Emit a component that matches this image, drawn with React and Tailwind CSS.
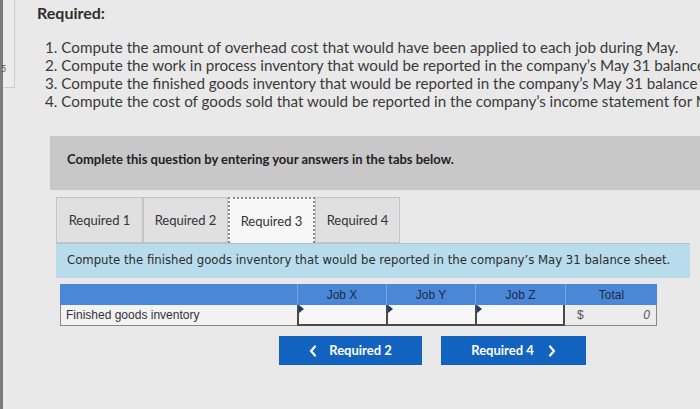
import React from 'react';

const tabs = ['Required 1', 'Required 2', 'Required 3', 'Required 4'];

const items = [
  '1. Compute the amount of overhead cost that would have been applied to each job during May.',
  '2. Compute the work in process inventory that would be reported in the company\u2019s May 31 balance sheet.',
  '3. Compute the finished goods inventory that would be reported in the company\u2019s May 31 balance sheet.',
  '4. Compute the cost of goods sold that would be reported in the company\u2019s income statement for May.',
];

const Marker = () => (
  <span className="absolute left-0 top-0 w-0 h-0 border-t-[4px] border-b-[4px] border-l-[5px] border-t-transparent border-b-transparent border-l-[#1f3b66]" />
);

const InputCell = ({ last }) => (
  <div className={`relative h-full bg-[#f7f7f7] border-l-2 border-b-2 border-[#4a4a4a] ${last ? 'border-r-2' : ''}`}>
    <Marker />
  </div>
);

const Chevron = ({ dir }) => (
  <svg width="8" height="12" viewBox="0 0 8 12" fill="none" stroke="white" strokeWidth="2.2" strokeLinecap="round" strokeLinejoin="round">
    {dir === 'left' ? <path d="M6 1.5 L2 6 L6 10.5" /> : <path d="M2 1.5 L6 6 L2 10.5" />}
  </svg>
);

export default function App() {
  return (
    <div className="w-[700px] h-[409px] overflow-hidden flex bg-[#e9e9e9] font-['Lato',sans-serif]">
      <div className="w-[3px] h-full bg-[#7c7c7c]" />
      <div className="w-[12px] shrink-0">
        <div className="h-[88px] bg-[#ececec] border-r border-b border-[#cfcfcf] flex items-end pb-[12px]">
          <span className="text-[9px] text-[#555] -ml-[2px]">5</span>
        </div>
      </div>

      <div className="flex-1 min-w-0 flex flex-col">
        <h2 className="pl-[22px] pt-[3px] text-[16px] leading-[20px] font-bold text-[#2e2e2e] whitespace-nowrap">Required:</h2>
        <ol className="mt-[15px] pl-[30px] text-[15.2px] leading-[18px] text-[#3a3a3a] whitespace-nowrap">
          {items.map((t) => (
            <li key={t}>{t}</li>
          ))}
        </ol>

        <div className="mt-[26px] ml-[35px] h-[54px] shrink-0 bg-[#c8c8c8] pt-[15px] pl-[17px]">
          <p className="text-[13px] leading-[16px] font-bold text-[#222] whitespace-nowrap">
            Complete this question by entering your answers in the tabs below.
          </p>
        </div>

        <div className="ml-[41px] mt-[7px] mr-[10px]">
          <div className="flex h-[46px]">
            {tabs.map((t, i) =>
              i === 2 ? (
                <div key={t} className="w-[87px] flex items-center justify-center pt-[2px] bg-[#f7f7f7] border-2 border-dotted border-[#8a8a8a] border-b-0 text-[13px] text-[#333]">
                  {t}
                </div>
              ) : (
                <div key={t} className={`${i === 0 ? 'w-[87px]' : 'w-[85px]'} flex items-center justify-center pt-[2px] bg-[#e0e0e0] border border-[#c4c4c4] text-[13px] text-[#333]`}>
                  {t}
                </div>
              )
            )}
          </div>
          <div className="h-[35px] bg-[#b8dcec] border-t border-[#a9c6d3] flex items-center pl-[11px]">
            <p className="font-['DejaVu_Sans',sans-serif] text-[11.7px] text-[#2c2c2c] whitespace-nowrap">
              Compute the finished goods inventory that would be reported in the company&rsquo;s May 31 balance sheet.
            </p>
          </div>

          <div className="mt-[6px] ml-[4px] w-[597px] font-['Liberation_Sans',sans-serif] text-[12px]">
            <div className="grid grid-cols-[237px_89px_89px_90px_92px] h-[21px] bg-[#4a87d6] text-[#1d2a47]">
              <div />
              <div className="flex items-center justify-center border-l border-[#7aa6e0]">Job X</div>
              <div className="flex items-center justify-center border-l border-[#7aa6e0]">Job Y</div>
              <div className="flex items-center justify-center border-l border-[#7aa6e0]">Job Z</div>
              <div className="flex items-center justify-center border-l border-[#7aa6e0]">Total</div>
            </div>
            <div className="grid grid-cols-[237px_89px_89px_90px_92px] h-[21px]">
              <div className="bg-[#f2f2f2] border-l border-b border-[#888] flex items-center pl-[5px] text-[#333]">
                Finished goods inventory
              </div>
              <InputCell />
              <InputCell />
              <InputCell last />
              <div className="bg-[#ececec] border-b border-r border-[#888] flex items-center justify-between pl-[12px] pr-[6px] text-[#555]">
                <span>$</span>
                <span className="italic">0</span>
              </div>
            </div>
          </div>

          <div className="mt-[10px] ml-[223px] flex gap-[19px]">
            <button className="w-[143px] h-[29px] bg-[#1163bf] text-white text-[13px] font-bold flex items-center justify-center gap-[12px]">
              <Chevron dir="left" />
              <span>Required 2</span>
            </button>
            <button className="w-[145px] h-[29px] bg-[#1163bf] text-white text-[13px] font-bold flex items-center justify-center gap-[14px]">
              <span>Required 4</span>
              <Chevron dir="right" />
            </button>
          </div>
        </div>
      </div>
    </div>
  );
}
